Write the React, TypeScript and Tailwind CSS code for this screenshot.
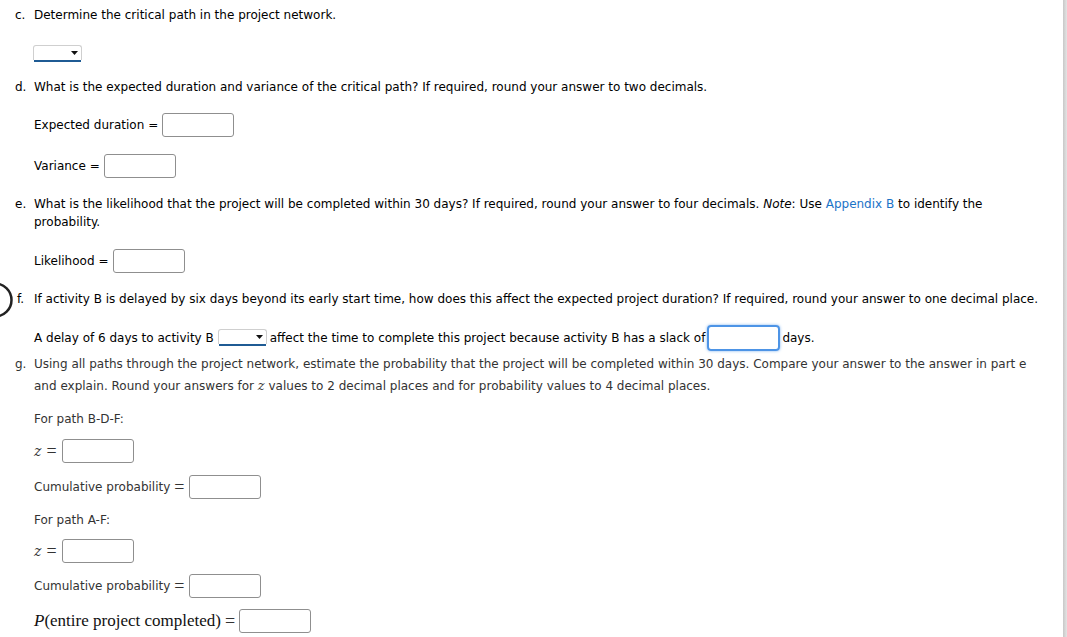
import React from 'react'

const body = { fontFamily: '"DejaVu Sans", Verdana, sans-serif' }
const serif = { fontFamily: '"Liberation Serif", "DejaVu Serif", serif' }
const mathZ = { fontFamily: '"DejaVu Serif", "Liberation Serif", serif' }

function Box({ w = 'w-[72px]' }: { w?: string }) {
  return <span className={`inline-block ${w} h-[24px] border border-[#8f8f8f] rounded-[3px] bg-white align-middle`} />
}

function Dropdown() {
  return (
    <span className="inline-flex items-center justify-end w-[49px] h-[15px] border border-[#cfcfcf] border-b-0 rounded-t-[3px] relative align-middle pr-[3px]">
      <svg width="7" height="4" viewBox="0 0 7 4">
        <path d="M0 0h7L3.5 4z" fill="#111" />
      </svg>
      <span className="absolute left-0 right-0 -bottom-[2px] h-[2px] bg-[#1f5b94]" />
    </span>
  )
}

function Eq({ m = 'mx-[4px]' }: { m?: string }) {
  return <span style={serif} className={`text-[18px] leading-none ${m} text-[#333]`}>=</span>
}

function Zed({ size = 'text-[14px]' }: { size?: string }) {
  return <span style={mathZ} className={`italic ${size} text-[#333]`}>z</span>
}

export default function App() {
  return (
    <div style={body} className="relative flex w-full h-[637px] overflow-hidden bg-white text-[12px] text-black">
      <svg className="absolute left-0 top-[281px]" width="14" height="38" viewBox="0 0 14 38">
        <circle cx="-5" cy="19" r="16.5" fill="none" stroke="#222" strokeWidth="2.5" />
      </svg>

      <div className="flex-1 pl-[15px] pt-[7px]">
        {/* c */}
        <div className="flex leading-[16px]">
          <span className="w-[19px]">c.</span>
          <span>Determine the critical path in the project network.</span>
        </div>
        <div className="pl-[18px] mt-[20px] h-[18px]">
          <Dropdown />
        </div>

        {/* d */}
        <div className="flex leading-[16px] mt-[18px]">
          <span className="w-[19px]">d.</span>
          <span>What is the expected duration and variance of the critical path? If required, round your answer to two decimals.</span>
        </div>
        <div className="pl-[19px] mt-[18px] flex items-center h-[24px]">
          Expected duration <span className="mx-[4px]">=</span> <Box />
        </div>
        <div className="pl-[19px] mt-[17px] flex items-center h-[24px]">
          Variance <span className="mx-[4px]">=</span> <Box />
        </div>

        {/* e */}
        <div className="flex leading-[18px] mt-[17px]">
          <span className="w-[19px] shrink-0">e.</span>
          <span className="pr-[60px]">
            What is the likelihood that the project will be completed within 30 days? If required, round your answer to four decimals.{' '}
            <i>Note</i>: Use <span className="text-[#1a73c7]">Appendix B</span> to identify the probability.
          </span>
        </div>
        <div className="pl-[19px] mt-[18px] flex items-center h-[24px]">
          Likelihood <span className="mx-[4px]">=</span> <Box />
        </div>

        {/* f */}
        <div className="flex leading-[16px] mt-[18px] ml-[2px]">
          <span className="w-[17px]">f.</span>
          <span>If activity B is delayed by six days beyond its early start time, how does this affect the expected project duration? If required, round your answer to one decimal place.</span>
        </div>
        <div className="pl-[19px] mt-[18px] flex items-center h-[26px]">
          A delay of 6 days to activity B
          <span className="ml-[4px] mr-[3px] h-[18px] flex items-start"><Dropdown /></span>
          affect the time to complete this project because activity B has a slack of
          <span className="inline-block w-[73px] h-[26px] border-2 border-[#4d94e6] rounded-[4px] shadow-[0_0_3px_#7fb2ee] mx-[2px]" />
          days.
        </div>

        {/* g */}
        <div className="flex leading-[21px] mt-[3px] text-[12px] text-[#333]">
          <span className="w-[19px] shrink-0">g.</span>
          <span className="pr-[24px]">
            Using all paths through the project network, estimate the probability that the project will be completed within 30 days. Compare your answer to the answer in part e and explain. Round your answers for <Zed size="text-[13px]" /> values to 2 decimal places and for probability values to 4 decimal places.
          </span>
        </div>

        <div className="text-[#333] text-[12px]">
          <div className="pl-[19px] mt-[12px] leading-[20px]">For path B-D-F:</div>
          <div className="pl-[19px] mt-[10px] flex items-center h-[24px]">
            <Zed /><Eq m="mx-[5px]" /><Box />
          </div>
          <div className="pl-[19px] mt-[12px] flex items-center h-[24px]">
            Cumulative probability<Eq /><Box />
          </div>
          <div className="pl-[19px] mt-[11px] leading-[20px]">For path A-F:</div>
          <div className="pl-[19px] mt-[9px] flex items-center h-[24px]">
            <Zed /><Eq m="mx-[5px]" /><Box />
          </div>
          <div className="pl-[19px] mt-[11px] flex items-center h-[24px]">
            Cumulative probability<Eq /><Box />
          </div>
          <div className="pl-[19px] mt-[11px] flex items-center h-[24px]">
            <span style={serif} className="text-[17px] text-[#111]">
              <i>P</i>(entire project completed)
            </span>
            <Eq /><Box />
          </div>
        </div>
      </div>

      <div className="w-[4px] bg-gradient-to-r from-[#c8c8c8] to-[#e4e4e4]" />
    </div>
  )
}
